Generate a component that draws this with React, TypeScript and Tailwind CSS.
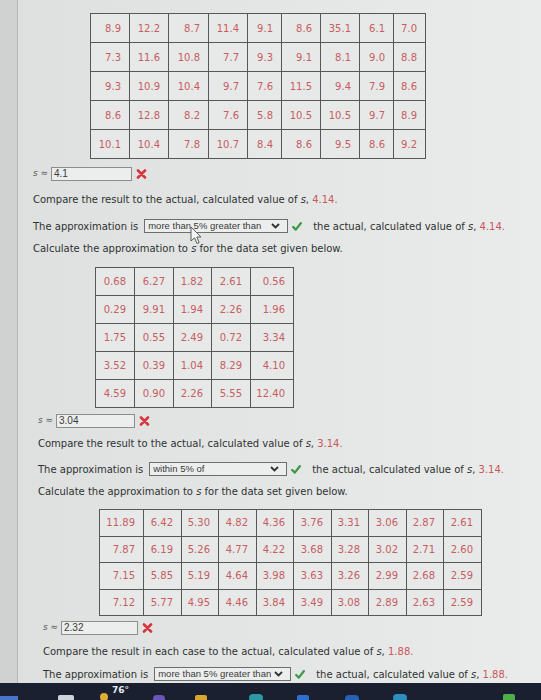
import React from 'react'

const T1 = [
  ['8.9', '12.2', '8.7', '11.4', '9.1', '8.6', '35.1', '6.1', '7.0'],
  ['7.3', '11.6', '10.8', '7.7', '9.3', '9.1', '8.1', '9.0', '8.8'],
  ['9.3', '10.9', '10.4', '9.7', '7.6', '11.5', '9.4', '7.9', '8.6'],
  ['8.6', '12.8', '8.2', '7.6', '5.8', '10.5', '10.5', '9.7', '8.9'],
  ['10.1', '10.4', '7.8', '10.7', '8.4', '8.6', '9.5', '8.6', '9.2'],
]
const W1 = ['w-[39px]', 'w-[39px]', 'w-[40px]', 'w-[39px]', 'w-[34px]', 'w-[39px]', 'w-[39px]', 'w-[34px]', 'w-[32px]']

const T2 = [
  ['0.68', '6.27', '1.82', '2.61', '0.56'],
  ['0.29', '9.91', '1.94', '2.26', '1.96'],
  ['1.75', '0.55', '2.49', '0.72', '3.34'],
  ['3.52', '0.39', '1.04', '8.29', '4.10'],
  ['4.59', '0.90', '2.26', '5.55', '12.40'],
]
const W2 = ['w-[39px]', 'w-[39px]', 'w-[38px]', 'w-[39px]', 'w-[43px]']

const T3 = [
  ['11.89', '6.42', '5.30', '4.82', '4.36', '3.76', '3.31', '3.06', '2.87', '2.61'],
  ['7.87', '6.19', '5.26', '4.77', '4.22', '3.68', '3.28', '3.02', '2.71', '2.60'],
  ['7.15', '5.85', '5.19', '4.64', '3.98', '3.63', '3.26', '2.99', '2.68', '2.59'],
  ['7.12', '5.77', '4.95', '4.46', '3.84', '3.49', '3.08', '2.89', '2.63', '2.59'],
]
const W3 = ['w-[44px]', 'w-[38px]', 'w-[37px]', 'w-[38px]', 'w-[37px]', 'w-[38px]', 'w-[37px]', 'w-[38px]', 'w-[37px]', 'w-[38px]']

const DataTable = ({ rows, cols, rowH }: { rows: string[][]; cols: string[]; rowH: string }) => {
  return (
    <table className="border-collapse">
      <colgroup>
        {cols.map((c, i) => (
          <col key={i} className={c} />
        ))}
      </colgroup>
      <tbody>
        {rows.map((r, i) => (
          <tr key={i} className={rowH}>
            {r.map((v, j) => (
              <td
                key={j}
                className="border border-[#555857] bg-[#e6e9e8] p-0 pr-[8px] text-right align-middle text-[10px] text-[#c85c60]"
              >
                {v}
              </td>
            ))}
          </tr>
        ))}
      </tbody>
    </table>
  )
}

const XMark = () => (
  <svg width="11" height="10" viewBox="0 0 11 10" className="ml-[4px]">
    <path d="M2 1.5 L9 8.5 M9 1.5 L2 8.5" stroke="#d8343c" strokeWidth="2.6" strokeLinecap="round" />
  </svg>
)

const Check = () => (
  <svg width="10" height="9" viewBox="0 0 10 9" className="ml-[4px]">
    <path d="M1.2 5 L3.8 7.6 L8.8 1.2" stroke="#3e9b45" strokeWidth="2.3" fill="none" strokeLinecap="round" strokeLinejoin="round" />
  </svg>
)

const Answer = ({ value, w }: { value: string; w: string }) => (
  <div className="flex h-[14px] items-center">
    <span className="w-[18px] text-[9px] text-[#5a5d5c]">
      <i>s</i> ≈
    </span>
    <div
      className={`h-[14px] border border-[#8b8e8d] bg-[#eceeed] pl-[2px] font-['Liberation_Sans',Arial,sans-serif] text-[10px] leading-[12px] text-[#3a3a3a] ${w}`}
    >
      {value}
    </div>
    <XMark />
  </div>
)

const Approx = ({ choice, actual, w }: { choice: string; actual: string; w: string }) => (
  <div className="flex h-[14px] items-center whitespace-nowrap">
    <span>The approximation is</span>
    <div
      className={`ml-[6px] flex h-[14px] shrink-0 items-center justify-between border border-[#6c6f6e] bg-[#eceeed] pl-[3px] pr-[7px] font-['Liberation_Sans',Arial,sans-serif] text-[9.5px] leading-[12px] text-[#3a3a3a] ${w}`}
    >
      <span>{choice}</span>
      <svg width="9" height="6" viewBox="0 0 9 6">
        <path d="M1 1 L4.5 4.5 L8 1" stroke="#2f3130" strokeWidth="1.8" fill="none" />
      </svg>
    </div>
    <Check />
    <span className="ml-[11px]">
      the actual, calculated value of <i>s</i>, <span className="text-[#c9575b]">{actual}.</span>
    </span>
  </div>
)

const Compare = ({ actual, each }: { actual: string; each?: boolean }) => (
  <p className="h-[14px] leading-[14px] whitespace-nowrap">
    Compare the result {each ? 'in each case ' : ''}to the actual, calculated value of <i>s</i>,{' '}
    <span className="text-[#c9575b]">{actual}.</span>
  </p>
)

const Calc = () => (
  <p className="h-[14px] leading-[14px] whitespace-nowrap">
    Calculate the approximation to <i>s</i> for the data set given below.
  </p>
)

const Cursor = () => (
  <svg width="12" height="19" viewBox="0 0 12 19" className="absolute left-[172px] top-[226px]">
    <path d="M1 1 L1 15 L4.5 11.8 L7 17.5 L9.2 16.6 L6.8 11 L11 11 Z" fill="#f4f5f5" stroke="#5a5d5c" strokeWidth="1" strokeLinejoin="round" />
  </svg>
)

const Taskbar = () => (
  <div className="flex h-[17px] items-start overflow-hidden bg-[#1a2030]">
    <div className="mt-[13px] h-[6px] w-[18px] bg-[#4a74c9]" />
    <div className="ml-[40px] mt-[12px] h-[6px] w-[16px] rounded-[2px] bg-[#cfd3da]" />
    <div className="ml-[26px] mt-[10px] h-[8px] w-[8px] rounded-full bg-[#e2a93b]" />
    <span className="ml-[4px] mt-[2px] font-['DejaVu_Sans',sans-serif] text-[9px] font-bold leading-[10px] text-[#e8eaf0]">76°</span>
    <div className="ml-[24px] mt-[12px] h-[8px] w-[12px] rounded-full bg-[#6b55b8]" />
    <div className="ml-[30px] mt-[12px] h-[8px] w-[12px] rounded-[2px] bg-[#d9a630]" />
    <div className="ml-[42px] mt-[11px] h-[8px] w-[14px] rounded-full bg-[#2b9aa3]" />
    <div className="ml-[34px] mt-[12px] h-[8px] w-[12px] rounded-[2px] bg-[#2f6fd0]" />
    <div className="ml-[36px] mt-[12px] h-[8px] w-[14px] rounded-full bg-[#2a5fb8]" />
    <div className="ml-[34px] mt-[11px] h-[8px] w-[14px] rounded-full bg-[#2c8fc0]" />
    <div className="ml-[96px] mt-[11px] h-[8px] w-[12px] rounded-[2px] bg-[#4fae4a]" />
  </div>
)

export default function App() {
  return (
    <div className="flex h-[700px] w-[541px] flex-col overflow-hidden font-['DejaVu_Sans',Verdana,sans-serif] text-[10px] text-[#2f3231]">
      <div className="flex flex-1 overflow-hidden bg-linear-to-r from-[#dde0df] via-[#e3e6e5] to-[#eaeceb]">
        <div className="w-[18px] shrink-0 border-r border-[#b4b7b6] bg-[#cfd2d1]" />
        <div className="relative flex-1">
          {/* first data set */}
          <div className="flex flex-col pl-[15px] pt-[13px]">
            <div className="ml-[57px]">
              <DataTable rows={T1} cols={W1} rowH="h-[29px]" />
            </div>
            <div className="mt-[8px]">
              <Answer value="4.1" w="w-[81px]" />
            </div>
            <div className="mt-[12px]">
              <Compare actual="4.14" />
            </div>
            <div className="mt-[12px]">
              <Approx choice="more than 5% greater than" actual="4.14" w="w-[144px]" />
            </div>
            <div className="mt-[9px]">
              <Calc />
            </div>
          </div>

          {/* second data set */}
          <div className="flex flex-col pl-[20px]">
            <div className="ml-[57px] mt-[11px]">
              <DataTable rows={T2} cols={W2} rowH="h-[28px]" />
            </div>
            <div className="mt-[6px]">
              <Answer value="3.04" w="w-[79px]" />
            </div>
            <div className="mt-[9px]">
              <Compare actual="3.14" />
            </div>
            <div className="mt-[11px]">
              <Approx choice="within 5% of" actual="3.14" w="w-[138px]" />
            </div>
            <div className="mt-[9px]">
              <Calc />
            </div>
          </div>

          {/* third data set */}
          <div className="flex flex-col pl-[25px]">
            <div className="ml-[56px] mt-[10px]">
              <DataTable rows={T3} cols={W3} rowH="h-[26.5px]" />
            </div>
            <div className="mt-[5px]">
              <Answer value="2.32" w="w-[77px]" />
            </div>
            <div className="mt-[10px]">
              <Compare actual="1.88" each />
            </div>
            <div className="mt-[8px]">
              <Approx choice="more than 5% greater than" actual="1.88" w="w-[137px]" />
            </div>
          </div>

          <Cursor />
        </div>
      </div>
      <Taskbar />
    </div>
  )
}
